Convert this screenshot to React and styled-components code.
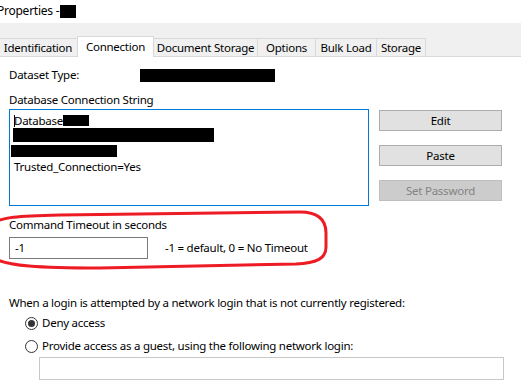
import React from 'react';
import styled, { createGlobalStyle } from 'styled-components';

const GlobalStyle = createGlobalStyle`
  html, body { margin: 0; padding: 0; background: #ffffff; }
  body {
    font-family: "Noto Sans", "Open Sans", sans-serif;
    font-size: 11.5px;
    letter-spacing: -0.25px;
    color: #000;
  }
`;

//properties dialog, connection tab
const tabs = [
  { label: 'Identification', w: 80 },
  { label: 'Connection', w: 77, active: true },
  { label: 'Document Storage', w: 105 },
  { label: 'Options', w: 59 },
  { label: 'Bulk Load', w: 62 },
  { label: 'Storage', w: 50 },
];

function App() {
  return (
    <>
      <GlobalStyle />
      <Window>
        <TitleBar>
          Properties -<Redact $w={16} $h={13} />
        </TitleBar>
        <TabStrip>
          {tabs.map(t => (
            <Tab key={t.label} $w={t.w} $active={t.active}>{t.label}</Tab>
          ))}
        </TabStrip>
        <Content>
          <FieldRow>
            <Label $w={131}>Dataset Type:</Label>
            <Redact $w={135} $h={13} />
          </FieldRow>

          <SectionLabel>Database Connection String</SectionLabel>
          <ConnRow>
            <ConnBox>
              <ConnLine>
                <Caret />Database<Redact $w={26} $h={11} />
              </ConnLine>
              <ConnLine><Redact $w={201} $h={14} $ml={-1} /></ConnLine>
              <ConnLine><Redact $w={106} $h={12} $ml={-3} /></ConnLine>
              <ConnLine>Trusted_Connection=Yes</ConnLine>
            </ConnBox>
            <ButtonColumn>
              <Button type="button">Edit</Button>
              <Button type="button">Paste</Button>
              <Button type="button" disabled>Set Password</Button>
            </ButtonColumn>
          </ConnRow>

          <SectionLabel $mt={11}>Command Timeout in seconds</SectionLabel>
          <TimeoutRow>
            <TextInput $w={139} defaultValue="-1" />
            <Hint>-1 = default, 0 = No Timeout</Hint>
          </TimeoutRow>

          <SectionLabel $mt={36}>When a login is attempted by a network login that is not currently registered:</SectionLabel>
          <RadioGroup>
            <RadioRow>
              <Radio $checked />Deny access
            </RadioRow>
            <RadioRow>
              <Radio />Provide access as a guest, using the following network login:
            </RadioRow>
            <GuestInput />
          </RadioGroup>
        </Content>

        <Annotation width="521" height="388" viewBox="0 0 521 388">
          <path
            d="M -6 224 C -2 217, 20 216, 60 215 L 300 212 C 318 212, 326 219, 326 233 L 326 247 C 326 259, 316 263, 296 264 L 100 268 C 40 268, 6 266, -6 258"
            fill="none"
            stroke="#ed1c24"
            strokeWidth="3"
            strokeLinecap="round"
          />
        </Annotation>
      </Window>
    </>
  );
}

const Window = styled.div`
  position: relative;
  width: 521px;
  height: 388px;
  overflow: hidden;
  background: #ffffff;
`;

const TitleBar = styled.div`
  height: 23px;
  display: flex;
  align-items: center;
  margin-left: -3px;
  gap: 1px;
  font-size: 12px;
  line-height: 16px;
  padding-bottom: 1px;
  box-sizing: border-box;
`;

const TabStrip = styled.div`
  height: 33px;
  background: #f0f0f0;
  border-bottom: 1px solid #d9d9d9;
  display: flex;
  align-items: flex-end;
  margin-left: -1px;
`;

const Tab = styled.div`
  width: ${p => p.$w}px;
  height: ${p => (p.$active ? 21 : 18)}px;
  box-sizing: border-box;
  border: 1px solid #d9d9d9;
  border-bottom: none;
  margin-left: -1px;
  margin-bottom: ${p => (p.$active ? -1 : 0)}px;
  background: ${p => (p.$active ? '#ffffff' : '#f0f0f0')};
  display: flex;
  align-items: ${p => (p.$active ? 'flex-start' : 'center')};
  padding-top: ${p => (p.$active ? 2 : 0)}px;
  justify-content: center;
  white-space: nowrap;
  position: relative;
  z-index: ${p => (p.$active ? 1 : 0)};
`;

const Content = styled.div`
  padding: 10px 0 0 9px;
  line-height: 16px;
`;

const FieldRow = styled.div`
  display: flex;
  align-items: center;
  height: 16px;
`;

const Label = styled.div`
  width: ${p => p.$w}px;
`;

const Redact = styled.span`
  display: inline-block;
  width: ${p => p.$w}px;
  height: ${p => p.$h}px;
  margin-left: ${p => p.$ml || 0}px;
  background: #000;
  vertical-align: middle;
`;

const SectionLabel = styled.div`
  margin-top: ${p => (p.$mt === undefined ? 9 : p.$mt)}px;
  white-space: nowrap;
`;

const ConnRow = styled.div`
  display: flex;
  gap: 10px;
  margin-top: 1px;
`;

const ConnBox = styled.div`
  width: 360px;
  height: 97px;
  box-sizing: border-box;
  border: 1px solid #0078d7;
  padding: 4px 0 0 4px;
`;

const ConnLine = styled.div`
  height: 13px;
  line-height: 13px;
  display: flex;
  align-items: center;
  white-space: nowrap;
  &:nth-child(2) { margin-top: 1px; }
  &:nth-child(3) { margin-top: 3px; }
  &:nth-child(4) { margin-top: 3px; }
`;

const Caret = styled.span`
  display: inline-block;
  width: 1px;
  height: 12px;
  background: #000;
  margin-right: -1px;
`;

const ButtonColumn = styled.div`
  display: flex;
  flex-direction: column;
  gap: 14px;
  padding-top: 1px;
`;

const Button = styled.button`
  width: 123px;
  height: 21px;
  box-sizing: border-box;
  border: 1px solid #adadad;
  background: #e1e1e1;
  font-family: inherit;
  font-size: 11.5px;
  letter-spacing: -0.25px;
  color: #000;
  padding: 0;
  &:disabled {
    background: #cccccc;
    border-color: #bfbfbf;
    color: #838383;
  }
`;

const TimeoutRow = styled.div`
  display: flex;
  align-items: center;
  gap: 17px;
  margin-top: 4px;
`;

const TextInput = styled.input`
  width: ${p => p.$w}px;
  height: 22px;
  box-sizing: border-box;
  border: 1px solid #7a7a7a;
  padding: 0 0 2px 5px;
  font-family: inherit;
  font-size: 11.5px;
  letter-spacing: -0.25px;
  outline: none;
`;

const Hint = styled.span`
  white-space: nowrap;
`;

const RadioGroup = styled.div`
  padding-left: 16px;
  margin-top: 4px;
  display: flex;
  flex-direction: column;
  gap: 7px;
`;

const RadioRow = styled.div`
  display: flex;
  align-items: center;
  gap: 4px;
  white-space: nowrap;
`;

const Radio = styled.span`
  width: 13px;
  height: 13px;
  box-sizing: border-box;
  border-radius: 50%;
  border: 1px solid #333;
  display: inline-flex;
  align-items: center;
  justify-content: center;
  &::after {
    content: '';
    width: 7px;
    height: 7px;
    border-radius: 50%;
    background: ${p => (p.$checked ? '#333' : 'transparent')};
  }
`;

const GuestInput = styled.div`
  width: 465px;
  height: 23px;
  box-sizing: border-box;
  border: 1px solid #c8c8c8;
  margin: -4px 0 0 14px;
`;

const Annotation = styled.svg`
  position: absolute;
  left: 0;
  top: 0;
  pointer-events: none;
`;

export default App;
